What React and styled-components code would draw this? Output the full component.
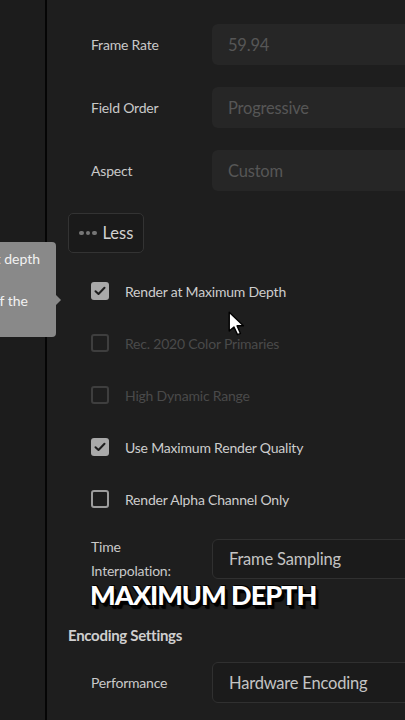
import React from 'react';
import styled, { createGlobalStyle } from 'styled-components';

const Global = createGlobalStyle`
  html, body {
    margin: 0;
    padding: 0;
    background: #1e1e1e;
  }
  * { box-sizing: border-box; }
`;

const Screen = styled.div`
  position: relative;
  display: flex;
  width: 405px;
  height: 720px;
  overflow: hidden;
  background: #1e1e1e;
  font-family: Lato, "Open Sans", sans-serif;
`;

const Sidebar = styled.div`
  width: 45px;
  flex-shrink: 0;
  background: #1c1c1c;
`;

const Divider = styled.div`
  width: 2px;
  flex-shrink: 0;
  background: #050505;
`;

const Main = styled.div`
  flex: 1;
  display: flex;
  flex-direction: column;
  padding: 24px 0 0 21px;
  min-width: 0;
`;

const FieldRow = styled.div`
  display: flex;
  align-items: center;
  height: ${p => p.$h || 41}px;
  margin-top: ${p => p.$mt || 0}px;
  padding-left: 23px;
`;

const Label = styled.div`
  width: 121px;
  flex-shrink: 0;
  color: #c9c9c9;
  font-size: 14px;
  line-height: 24px;
  letter-spacing: -0.2px;
`;

const Field = styled.div`
  width: 230px;
  height: 100%;
  flex-shrink: 0;
  display: flex;
  align-items: center;
  padding-left: 16px;
  border-radius: 6px;
  font-size: 16.5px;
  letter-spacing: -0.2px;
  ${p => p.$select ? `
    background: #1b1b1b;
    border: 1.5px solid #303030;
    color: #c4c4c4;
  ` : `
    background: #262626;
    color: #565656;
  `}
`;

const LessButton = styled.div`
  display: flex;
  align-items: center;
  gap: 6px;
  width: 76px;
  height: 40px;
  margin-top: 22px;
  padding-left: 10px;
  border: 1.5px solid #333;
  border-radius: 5px;
  background: #1a1a1a;
  color: #d2d2d2;
  font-size: 16.5px;
`;

const Dots = styled.span`
  display: flex;
  gap: 2px;
  & > i {
    width: 4.5px;
    height: 4.5px;
    border-radius: 50%;
    background: #767676;
  }
`;

const CheckList = styled.div`
  margin-top: 12px;
  display: flex;
  flex-direction: column;
`;

const CheckRow = styled.div`
  display: flex;
  align-items: center;
  gap: 16px;
  height: 52px;
  padding-left: 23px;
  color: ${p => p.$disabled ? '#4a4a4a' : '#cdcdcd'};
  font-size: 14px;
  letter-spacing: -0.2px;
`;

const Box = styled.span`
  width: 18px;
  height: 18px;
  border-radius: 3px;
  display: flex;
  align-items: center;
  justify-content: center;
  ${p => p.$checked ? `
    background: #a9a9a9;
  ` : `
    border: 2px solid ${p.$disabled ? '#3e3e3e' : '#9d9d9d'};
  `}
`;

const Heading = styled.div`
  margin-top: 46px;
  line-height: 20px;
  color: #cfcfcf;
  font-size: 15px;
  font-weight: 700;
  letter-spacing: -0.3px;
`;

const Tooltip = styled.div`
  position: absolute;
  top: 242px;
  right: 349px;
  width: 180px;
  height: 95px;
  padding: 6px 16px 0 0;
  background: #898989;
  border-radius: 4px;
  color: #f2f2f2;
  font-size: 14px;
  line-height: 21px;
  text-align: right;

  &::after {
    content: '';
    position: absolute;
    right: -5px;
    top: 52px;
    border-top: 6px solid transparent;
    border-bottom: 6px solid transparent;
    border-left: 6px solid #898989;
  }
`;

const TipLine = styled.div`
  padding-right: ${p => p.$pr || 0}px;
  white-space: nowrap;
`;

const Caption = styled.div`
  position: absolute;
  left: 90px;
  top: 580px;
  color: #ffffff;
  font-family: Lato, "DejaVu Sans", sans-serif;
  font-weight: 900;
  font-size: 27px;
  line-height: 30px;
  letter-spacing: -1px;
  text-shadow: 2px 3px 0 #000, -1px 1px 0 #000, 1px -1px 0 #000, 3px 4px 1px #000;
`;

const Cursor = styled.svg`
  position: absolute;
  left: 228px;
  top: 311px;
`;

const Check = () => (
  <svg width="12" height="10" viewBox="0 0 12 10">
    <path d="M1.5 5.2 L4.5 8 L10.5 1.8" fill="none" stroke="#1e1e1e" strokeWidth="2" strokeLinecap="round" strokeLinejoin="round" />
  </svg>
);

const checks = [
  { label: 'Render at Maximum Depth', checked: true },
  { label: 'Rec. 2020 Color Primaries', disabled: true },
  { label: 'High Dynamic Range', disabled: true },
  { label: 'Use Maximum Render Quality', checked: true },
  { label: 'Render Alpha Channel Only' },
];

export default function App() {
  return (
    <>
      <Global />
      <Screen>
        <Sidebar />
        <Divider />
        <Main>
          <FieldRow>
            <Label>Frame Rate</Label>
            <Field>59.94</Field>
          </FieldRow>
          <FieldRow $mt={22}>
            <Label>Field Order</Label>
            <Field>Progressive</Field>
          </FieldRow>
          <FieldRow $mt={22}>
            <Label>Aspect</Label>
            <Field>Custom</Field>
          </FieldRow>

          <LessButton>
            <Dots><i /><i /><i /></Dots>
            Less
          </LessButton>

          <CheckList>
            {checks.map(c => (
              <CheckRow key={c.label} $disabled={c.disabled}>
                <Box $checked={c.checked} $disabled={c.disabled}>
                  {c.checked && <Check />}
                </Box>
                {c.label}
              </CheckRow>
            ))}
          </CheckList>

          <FieldRow $h={40} $mt={14}>
            <Label>Time<br />Interpolation:</Label>
            <Field $select>Frame Sampling</Field>
          </FieldRow>

          <Heading>Encoding Settings</Heading>

          <FieldRow $mt={17}>
            <Label>Performance</Label>
            <Field $select>Hardware Encoding</Field>
          </FieldRow>
        </Main>

        <Tooltip>
          <TipLine>the maximum bit depth</TipLine>
          <TipLine $pr={60}>for the output</TipLine>
          <TipLine $pr={12}>quality of the</TipLine>
          <TipLine $pr={60}>video</TipLine>
        </Tooltip>

        <Cursor width="19" height="26" viewBox="0 0 16 22">
          <path d="M1 1 L1 17 L5 13.5 L8 20 L10.5 19 L7.6 12.5 L13 12.5 Z" fill="#ffffff" stroke="#000" strokeWidth="1.2" strokeLinejoin="round" />
        </Cursor>

        <Caption>MAXIMUM DEPTH</Caption>
      </Screen>
    </>
  );
}
